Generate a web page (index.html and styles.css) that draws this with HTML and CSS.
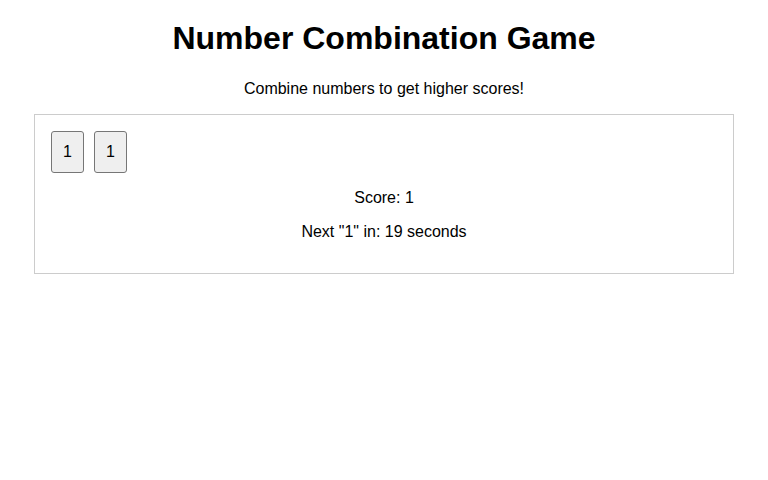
FILE: index.html
```html
<!DOCTYPE html>
<html lang="en">
<head>
<meta charset="utf-8">
<title>Number Combination Game</title>
<link rel="stylesheet" href="styles.css">
</head>
<body>
<main class="game">
  <h1 class="title">Number Combination Game</h1>
  <p class="subtitle">Combine numbers to get higher scores!</p>
  <section class="board">
    <div class="tiles">
      <button class="tile" type="button">1</button>
      <button class="tile" type="button">1</button>
    </div>
    <p class="score">Score: 1</p>
    <p class="timer">Next "1" in: 19 seconds</p>
  </section>
</main>
</body>
</html>
```

FILE: styles.css
```css
html, body {
  margin: 0;
  padding: 0;
  background: #fff;
}

body {
  font-family: "Liberation Sans", Arial, sans-serif;
  font-size: 16px;
  color: #000;
}

.game {
  max-width: 700px;
  margin: 0 auto;
  display: flex;
  flex-direction: column;
}

.title {
  margin: 20px 0 0;
  font-size: 32px;
  line-height: 37px;
  font-weight: bold;
  text-align: center;
}

.subtitle {
  margin: 23px 0 16px;
  line-height: 18px;
  text-align: center;
}

.board {
  border: 1px solid #ccc;
  padding: 16px;
  display: flex;
  flex-direction: column;
}

.tiles {
  display: flex;
  gap: 10px;
}

.tile {
  width: 33px;
  height: 42px;
  padding: 0;
  display: flex;
  align-items: center;
  justify-content: center;
  font-family: "Liberation Sans", Arial, sans-serif;
  font-size: 16px;
  color: #000;
  background: #efefef;
  border: 1px solid #767676;
  border-radius: 3px;
}

.score {
  margin: 16px 0 0;
  line-height: 18px;
  text-align: center;
}

.timer {
  margin: 16px 0 16px;
  line-height: 18px;
  text-align: center;
}
```
